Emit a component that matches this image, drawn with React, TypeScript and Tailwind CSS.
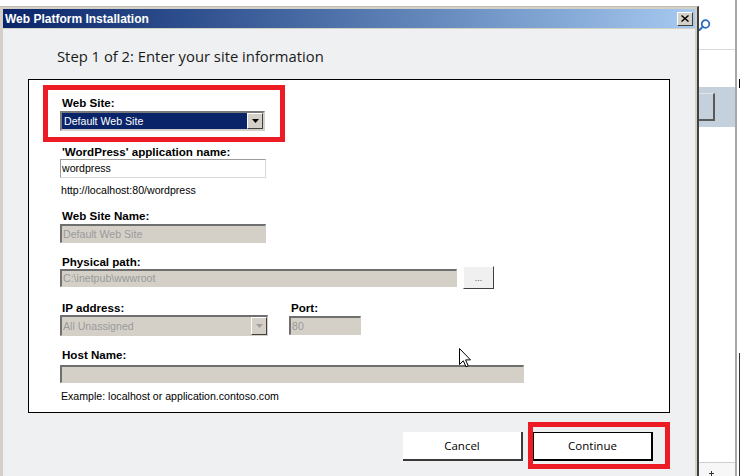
import type { ReactNode } from 'react'

function FieldLabel({ children, className = '' }: { children: ReactNode; className?: string }) {
  return (
    <div className={`ml-[2px] h-[14px] whitespace-nowrap text-[11.6px] leading-[14px] font-bold text-black ${className}`}>
      {children}
    </div>
  )
}

function ArrowButton({ disabled = false }: { disabled?: boolean }) {
  return (
    <div className="flex h-full w-[16px] shrink-0 items-center justify-center border border-t-white border-l-white border-r-[#404040] border-b-[#404040] bg-[#d4d0c8]">
      <svg width="7" height="4" viewBox="0 0 7 4">
        <path d="M0 0h7L3.5 4z" fill={disabled ? '#a0a0a0' : '#000'} />
      </svg>
    </div>
  )
}

function DisabledInput({ value, className = '' }: { value?: string; className?: string }) {
  return (
    <div
      className={`flex items-center border-t-2 border-l-2 border-r border-b border-t-[#6f6f6f] border-l-[#6f6f6f] border-r-[#d4d0c8] border-b-[#d4d0c8] bg-[#d4d0c8] pl-[1px] text-[10.6px] leading-[13px] text-[#9a9a9a] ${className}`}
    >
      {value}
    </div>
  )
}

function SearchGlyph() {
  return (
    <svg width="14" height="13" viewBox="0 0 14 13">
      <circle cx="6.5" cy="6" r="3.8" fill="none" stroke="#2b6fc2" strokeWidth="1.8" />
      <path d="M3.6 8.9L0.5 12" stroke="#2b6fc2" strokeWidth="2" strokeLinecap="round" />
    </svg>
  )
}

function Cursor() {
  return (
    <svg width="13" height="20" viewBox="0 0 13 20" className="absolute left-[459px] top-[348px]">
      <path
        d="M0.5 0.5V16.5L4.3 12.8L7 18.8L9.2 17.8L6.6 11.9H11.5Z"
        fill="#fff"
        stroke="#000"
        strokeWidth="1"
        strokeLinejoin="round"
      />
    </svg>
  )
}

export default function App() {
  return (
    <div className="relative flex h-[476px] w-[740px] overflow-hidden bg-white font-['Liberation_Sans',Arial,sans-serif]">
      {/* dialog column */}
      <div className="flex w-[699px] shrink-0 flex-col pt-[6px]">
        <div className="flex flex-1 flex-col border-t border-r-2 border-t-[#c2beb6] border-r-[#404040] bg-[#d4d0c8] pt-[2px] pl-[3px] pr-[2px]">
          {/* title bar */}
          <div className="flex h-[19px] shrink-0 items-center justify-between bg-linear-to-r from-[#0a246a] to-[#a6caf0] pl-[2px] pr-[2px]">
            <span className="text-[12px] leading-[14px] font-bold text-white">Web Platform Installation</span>
            <div className="flex h-[14px] w-[16px] items-center justify-center border border-t-white border-l-white border-r-[#404040] border-b-[#404040] bg-[#d4d0c8]">
              <svg width="8" height="7" viewBox="0 0 8 7">
                <path d="M0.5 0.5L7.5 6.5M7.5 0.5L0.5 6.5" stroke="#000" strokeWidth="1.4" />
              </svg>
            </div>
          </div>

          {/* body */}
          <div className="mt-[1px] flex flex-1 flex-col bg-[#eff0f2] pt-[17px]">
            <div className="h-[20px] pl-[54px] font-['Open_Sans','Noto_Sans',sans-serif] text-[14.8px] leading-[20px] text-[#1a1a1a]">
              Step 1 of 2: Enter your site information
            </div>

            <div className="mt-[13px] ml-[25px] h-[334px] w-[642px] border border-black bg-white">
              {/* highlighted web site selector */}
              <div className="mt-[5px] ml-[14px] h-[57px] w-[242px] border-[5px] border-[#ed1c24] pt-[6px] pl-[12px]">
                <FieldLabel>Web Site:</FieldLabel>
                <div className="mt-[1px] flex h-[20px] w-[205px] border-2 border-t-[#7a7a7a] border-l-[#7a7a7a] border-r-[#d4d0c8] border-b-[#d4d0c8]">
                  <div className="flex flex-1 items-center bg-[#0a246a] pl-[2px] text-[10.6px] leading-[13px] text-white">
                    Default Web Site
                  </div>
                  <ArrowButton />
                </div>
              </div>

              <div className="pl-[31px]">
                <FieldLabel className="mt-[3px]">'WordPress' application name:</FieldLabel>
                <div className="flex h-[19px] w-[206px] items-center border border-t-[#9c9c9c] border-l-[#9c9c9c] border-r-[#d8d8d8] border-b-[#d8d8d8] bg-white pl-[1px] text-[10.6px] leading-[13px] text-black">
                  wordpress
                </div>
                <div className="mt-[6px] ml-[1px] h-[13px] text-[10.6px] leading-[13px] text-black">
                  http://localhost:80/wordpress
                </div>

                <FieldLabel className="mt-[12px]">Web Site Name:</FieldLabel>
                <DisabledInput value="Default Web Site" className="mt-[1px] h-[19px] w-[206px]" />

                <FieldLabel className="mt-[12px]">Physical path:</FieldLabel>
                <div className="-mt-[3px] flex h-[23px] items-center gap-[6px]">
                  <DisabledInput value="C:\inetpub\wwwroot" className="h-[18px] w-[397px]" />
                  <div className="flex h-[23px] w-[31px] items-center justify-center border border-t-white border-l-white border-r-[#404040] border-b-[#404040] bg-[#f0f0f0] text-[9px] leading-[10px] text-[#555]">
                    ...
                  </div>
                </div>

                <div className="mt-[12px] flex">
                  <div className="w-[208px]">
                    <FieldLabel>IP address:</FieldLabel>
                    <div className="flex h-[21px] w-[208px] border-t-2 border-l-2 border-r border-b border-t-[#6f6f6f] border-l-[#6f6f6f] border-r-[#d4d0c8] border-b-[#d4d0c8] bg-[#d4d0c8]">
                      <div className="flex flex-1 items-center pl-[1px] text-[10.6px] leading-[13px] text-[#9a9a9a]">
                        All Unassigned
                      </div>
                      <ArrowButton disabled />
                    </div>
                  </div>
                  <div className="ml-[21px]">
                    <FieldLabel className="ml-0">Port:</FieldLabel>
                    <DisabledInput value="80" className="mt-[1px] h-[19px] w-[72px]" />
                  </div>
                </div>

                <FieldLabel className="mt-[12px]">Host Name:</FieldLabel>
                <DisabledInput className="mt-[3px] h-[18px] w-[464px]" />
                <div className="mt-[7px] ml-[1px] h-[13px] text-[10.6px] leading-[13px] text-black">
                  Example: localhost or application.contoso.com
                </div>
              </div>
            </div>

            {/* buttons */}
            <div className="flex items-start pl-[400px] font-['Open_Sans','Noto_Sans',sans-serif] text-[11.5px] text-black">
              <button className="mt-[19px] flex h-[29px] w-[120px] items-center justify-center border-r-2 border-b-2 border-[#3a3a3a] bg-white">
                Cancel
              </button>
              <div className="mt-[9px] ml-[5px] h-[47px] w-[142px] border-[5px] border-[#ed1c24] pt-[5px]">
                <button className="flex h-[29px] w-[120px] items-center justify-center border-t border-l border-r-2 border-b-2 border-black bg-white">
                  Continue
                </button>
              </div>
            </div>
          </div>
        </div>
      </div>

      {/* background application, partly hidden behind the dialog */}
      <div className="flex w-[36px] shrink-0 flex-col bg-white">
        <div className="h-[49px] pt-[18px]">
          <SearchGlyph />
        </div>
        <div className="h-px bg-[#d9d9d9]" />
        <div className="h-[37px]" />
        <div className="h-[40px] bg-[#c4d1dd] pt-[6px]">
          <div className="h-[28px] w-[16px] border-t border-r-2 border-b-2 border-t-[#e4e4e4] border-r-[#5a5a5a] border-b-[#5a5a5a]" />
        </div>
        <div className="flex-1" />
        <div className="h-px bg-[#d0d0d0]" />
        <div className="relative h-[13px] bg-[#f7f7f7]">
          <div className="absolute left-[12px] top-[8px] h-[5px] w-px bg-[#333]" />
          <div className="absolute left-[10px] top-[10px] h-px w-[5px] bg-[#333]" />
        </div>
      </div>
      <div className="w-[2px] shrink-0 bg-[#a8a8a8]" />
      <div className="flex w-[3px] shrink-0 flex-col">
        <div className="h-[79px]" />
        <div className="h-[9px] border-r border-black" />
        <div className="h-[265px]" />
        <div className="flex-1 border-r border-[#333]" />
      </div>

      <Cursor />
    </div>
  )
}
